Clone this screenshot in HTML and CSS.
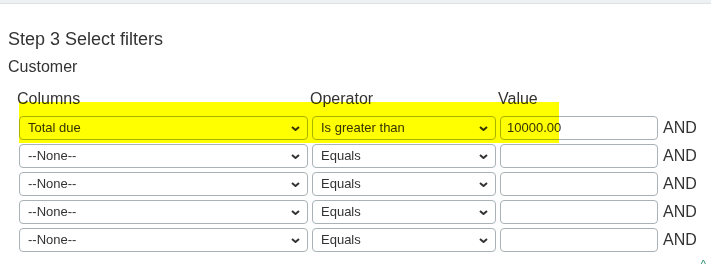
FILE: index.html
```html
<!DOCTYPE html>
<html lang="en">
<head>
    <meta charset="UTF-8">
    <meta name="viewport" content="width=device-width, initial-scale=1.0">
    <title>Select filters</title>
    <link rel="stylesheet" href="styles.css">
</head>
<body>
    <div class="topbar"></div>
    <div class="page">
        <h2 class="step">Step 3 Select filters</h2>
        <div class="object">Customer</div>

        <div class="filters">
            <span class="marker"></span>

            <div class="head">Columns</div>
            <div class="head">Operator</div>
            <div class="head">Value</div>
            <div></div>

            <span class="pick"><select class="field"><option>Total due</option></select><svg class="chev" viewBox="0 0 9 5"><path d="M1 1l3.5 3 3.5-3"/></svg></span>
            <span class="pick"><select class="field"><option>Is greater than</option></select><svg class="chev" viewBox="0 0 9 5"><path d="M1 1l3.5 3 3.5-3"/></svg></span>
            <input type="text" class="field" value="10000.00">
            <span class="join">AND</span>

            <span class="pick"><select class="field"><option>--None--</option></select><svg class="chev" viewBox="0 0 9 5"><path d="M1 1l3.5 3 3.5-3"/></svg></span>
            <span class="pick"><select class="field"><option>Equals</option></select><svg class="chev" viewBox="0 0 9 5"><path d="M1 1l3.5 3 3.5-3"/></svg></span>
            <input type="text" class="field">
            <span class="join">AND</span>

            <span class="pick"><select class="field"><option>--None--</option></select><svg class="chev" viewBox="0 0 9 5"><path d="M1 1l3.5 3 3.5-3"/></svg></span>
            <span class="pick"><select class="field"><option>Equals</option></select><svg class="chev" viewBox="0 0 9 5"><path d="M1 1l3.5 3 3.5-3"/></svg></span>
            <input type="text" class="field">
            <span class="join">AND</span>

            <span class="pick"><select class="field"><option>--None--</option></select><svg class="chev" viewBox="0 0 9 5"><path d="M1 1l3.5 3 3.5-3"/></svg></span>
            <span class="pick"><select class="field"><option>Equals</option></select><svg class="chev" viewBox="0 0 9 5"><path d="M1 1l3.5 3 3.5-3"/></svg></span>
            <input type="text" class="field">
            <span class="join">AND</span>

            <span class="pick"><select class="field"><option>--None--</option></select><svg class="chev" viewBox="0 0 9 5"><path d="M1 1l3.5 3 3.5-3"/></svg></span>
            <span class="pick"><select class="field"><option>Equals</option></select><svg class="chev" viewBox="0 0 9 5"><path d="M1 1l3.5 3 3.5-3"/></svg></span>
            <input type="text" class="field">
            <span class="join">AND</span>
        </div>

        <div class="collapse">^</div>
    </div>
</body>
</html>
```

FILE: styles.css
```css
*{
    margin: 0;
    padding: 0;
    box-sizing: border-box;
}

html,body{
    width: 100%;
    height: 100%;
    overflow: hidden;
    background-color: #fff;
    font-family: "Liberation Sans", Arial, sans-serif;
    color: #333;
}

.topbar{
    height: 4px;
    background-color: #eef1f1;
    border-bottom: 1px solid #dde2e2;
}

.page{
    padding-left: 8px;
}

.step{
    margin-top: 24.5px;
    font-size: 18px;
    line-height: 21px;
    font-weight: normal;
}

.object{
    margin-top: 8.7px;
    font-size: 16px;
    line-height: 18px;
}

.filters{
    position: relative;
    margin-top: 13.8px;
    margin-left: 11px;
    display: grid;
    grid-template-columns: 289px 184px 158px auto;
    column-gap: 4px;
    row-gap: 4px;
    grid-auto-rows: 24px;
    grid-template-rows: 22px;
}

.head{
    margin-left: -2px;
    font-size: 16px;
    line-height: 18px;
}

.pick{
    position: relative;
    display: block;
}

.field{
    display: block;
    width: 100%;
    height: 24px;
    padding: 0 22px 0 8px;
    font-family: "Liberation Sans", Arial, sans-serif;
    font-size: 13px;
    color: #333;
    background-color: #fff;
    border: 1px solid #a9b3b7;
    border-radius: 4px;
    appearance: none;
    -webkit-appearance: none;
    outline: none;
}

input.field{
    padding: 0 6px;
}

.chev{
    position: absolute;
    right: 8px;
    top: 10px;
    width: 9px;
    height: 5px;
    fill: none;
    stroke: #333;
    stroke-width: 2;
    pointer-events: none;
}

.join{
    font-size: 16px;
    line-height: 24px;
    margin-left: 1px;
}

/* highlighter mark over the first row */
.marker{
    position: absolute;
    left: 0;
    top: 12px;
    width: 540px;
    height: 41px;
    background-color: #ffff00;
    mix-blend-mode: multiply;
    pointer-events: none;
    z-index: 2;
}

.collapse{
    text-align: right;
    padding-right: 5px;
    margin-top: 7px;
    font-size: 11px;
    line-height: 10px;
    color: #1f8a6e;
}
```
